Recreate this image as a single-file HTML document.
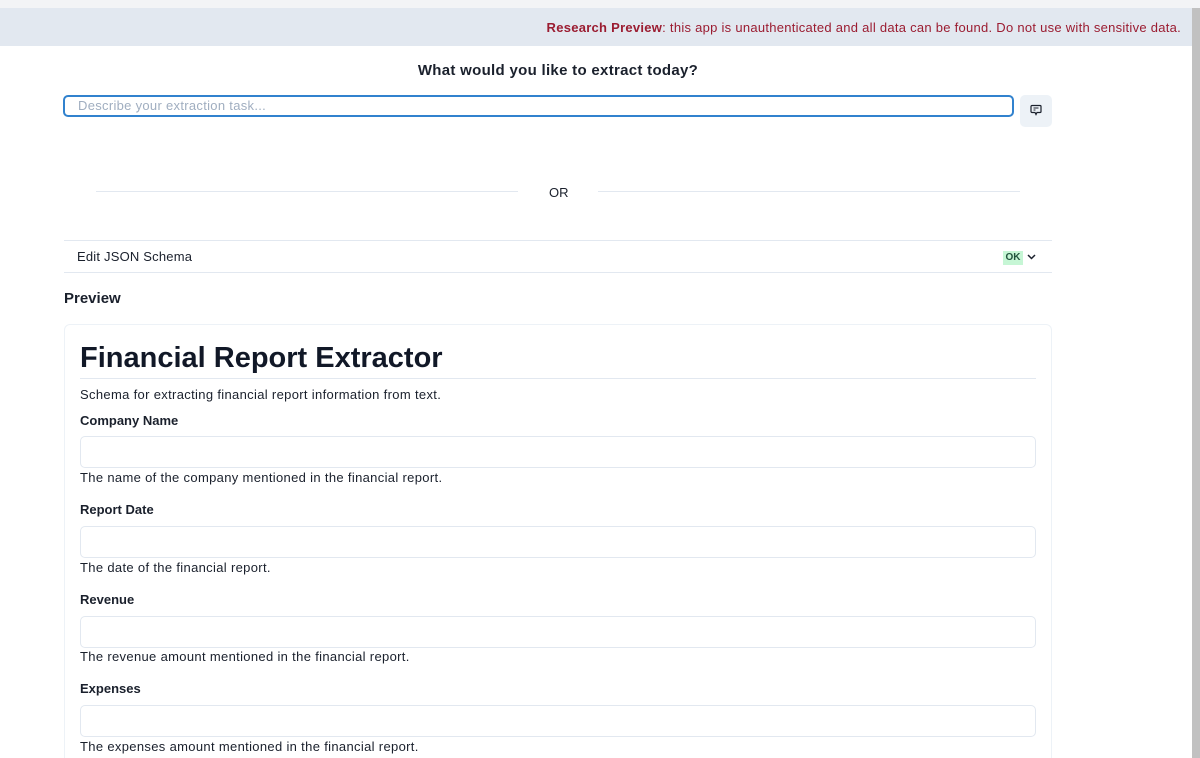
<!DOCTYPE html>
<html><head><style>
*{box-sizing:border-box;margin:0;padding:0}
html,body{width:1200px;height:758px;overflow:hidden}
body{background:#fff;font-family:"Liberation Sans",sans-serif;color:#1a202c;position:relative}
.a{position:absolute;white-space:nowrap}
.inp{position:absolute;left:80px;width:956px;height:32px;border:1px solid #e2e8f0;border-radius:5px}
.lbl{font-size:13px;font-weight:bold;color:#1a202c}
.desc{font-size:13px;color:#1a202c;letter-spacing:0.33px}
</style></head><body>
<div class="a" style="left:0;top:0;width:1200px;height:8px;background:#f3f4f6"></div>
<div class="a" style="left:0;top:8px;width:1192px;height:38px;background:#e2e8f0"></div>
<div class="a" style="right:19px;top:20px;font-size:13px;color:#9b1c31;letter-spacing:0.27px"><b>Research Preview</b>: this app is unauthenticated and all data can be found. Do not use with sensitive data.</div>
<div class="a" style="left:1192px;top:8px;width:8px;height:750px;background:#c1c1c1"></div>
<div class="a" style="left:0;top:62px;width:1116px;text-align:center;font-size:15px;font-weight:bold;letter-spacing:0.3px">What would you like to extract today?</div>
<div class="a" style="left:63px;top:95px;width:951px;height:22px;border:2px solid #3182ce;border-radius:5px"></div>
<div class="a" style="left:78px;top:98px;font-size:13px;color:#a0aec0;letter-spacing:0.3px">Describe your extraction task...</div>
<div class="a" style="left:1020px;top:95px;width:32px;height:32px;background:#edf2f7;border-radius:5px"></div>
<svg class="a" style="left:1030px;top:104px" width="12" height="13" viewBox="0 0 12 13"><path d="M2 1.5h8a1 1 0 0 1 1 1v5a1 1 0 0 1-1 1H7l-1 2-1-2H2a1 1 0 0 1-1-1v-5a1 1 0 0 1 1-1z" fill="none" stroke="#1a202c" stroke-width="1.2"/><path d="M3.5 4h5M3.5 6h2" stroke="#1a202c" stroke-width="1"/></svg>
<div class="a" style="left:96px;top:191px;width:422px;height:1px;background:#e2e8f0"></div>
<div class="a" style="left:598px;top:191px;width:422px;height:1px;background:#e2e8f0"></div>
<div class="a" style="left:549px;top:185px;font-size:13px">OR</div>
<div class="a" style="left:64px;top:240px;width:988px;height:1px;background:#e2e8f0"></div>
<div class="a" style="left:64px;top:272px;width:988px;height:1px;background:#e2e8f0"></div>
<div class="a" style="left:77px;top:249px;font-size:13px;letter-spacing:0.2px">Edit JSON Schema</div>
<div class="a" style="left:1003px;top:251px;width:20px;height:14px;background:#c6f6d5;color:#22543d;font-size:10px;font-weight:bold;text-align:center;line-height:14px">OK</div>
<svg class="a" style="left:1027px;top:254px" width="9" height="6" viewBox="0 0 9 6"><path d="M1 1l3.5 3.5L8 1" fill="none" stroke="#1a202c" stroke-width="1.5"/></svg>
<div class="a" style="left:64px;top:290px;font-size:15px;font-weight:bold">Preview</div>
<div class="a" style="left:64px;top:324px;width:988px;height:450px;border:1px solid #edf2f7;border-radius:6px"></div>
<div class="a" style="left:80px;top:342px;font-size:29px;font-weight:bold;color:#111827">Financial Report Extractor</div>
<div class="a" style="left:80px;top:378px;width:956px;height:1px;background:#e2e8f0"></div>
<div class="a desc" style="left:80px;top:387px">Schema for extracting financial report information from text.</div>
<div class="a lbl" style="left:80px;top:413px">Company Name</div>
<div class="inp" style="top:436px"></div>
<div class="a desc" style="left:80px;top:470px">The name of the company mentioned in the financial report.</div>
<div class="a lbl" style="left:80px;top:502px">Report Date</div>
<div class="inp" style="top:526px"></div>
<div class="a desc" style="left:80px;top:560px">The date of the financial report.</div>
<div class="a lbl" style="left:80px;top:592px">Revenue</div>
<div class="inp" style="top:616px"></div>
<div class="a desc" style="left:80px;top:649px">The revenue amount mentioned in the financial report.</div>
<div class="a lbl" style="left:80px;top:681px">Expenses</div>
<div class="inp" style="top:705px"></div>
<div class="a desc" style="left:80px;top:739px">The expenses amount mentioned in the financial report.</div>
</body></html>
